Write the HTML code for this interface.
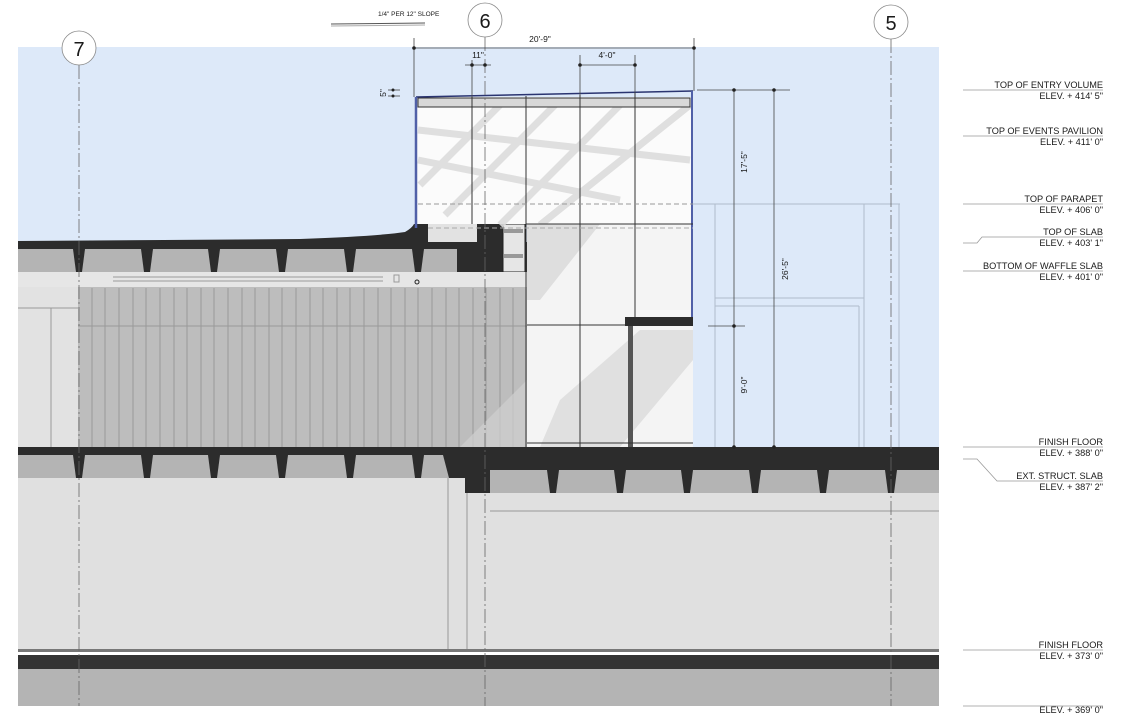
<!DOCTYPE html>
<html><head><meta charset="utf-8"><style>
html,body{margin:0;padding:0;background:#fff;}
svg{display:block;}
text{font-family:"Liberation Sans",sans-serif;fill:#1a1a1a;}
</style></head><body>
<svg width="1125" height="727" viewBox="0 0 1125 727" xmlns="http://www.w3.org/2000/svg">
<rect x="18" y="47" width="921" height="400" fill="#dde9f9"/>
<path d="M18 241 L300 239 Q380 236 405 232 Q412 228 414 224 L420 224 L420 249 L18 249 Z" fill="#2c2c2c"/>
<rect x="18" y="249" width="440" height="23" fill="#b4b4b4"/>
<g fill="#2c2c2c">
<path d="M73 249h12l-3 23h-6z"/><path d="M141 249h12l-3 23h-6z"/><path d="M208 249h12l-3 23h-6z"/><path d="M276 249h12l-3 23h-6z"/><path d="M344 249h12l-3 23h-6z"/><path d="M412 249h12l-3 23h-6z"/>
</g>
<rect x="418" y="224" width="10" height="25" fill="#2c2c2c"/>
<rect x="428" y="224" width="50" height="18" fill="#e2e2e2"/>
<rect x="428" y="242" width="50" height="7" fill="#2c2c2c"/>
<rect x="457" y="242" width="70" height="30" fill="#2c2c2c"/>
<rect x="477" y="224" width="26" height="20" fill="#2c2c2c"/>
<rect x="503" y="224" width="22" height="48" fill="#e6e6e6" stroke="#222" stroke-width="1"/>
<rect x="504" y="229" width="19" height="4" fill="#999"/><rect x="504" y="254" width="19" height="4" fill="#999"/>
<rect x="18" y="272" width="509" height="15" fill="#e6e6e6"/>
<line x1="113" y1="277" x2="383" y2="277" stroke="#999" stroke-width="1"/>
<line x1="113" y1="281" x2="383" y2="281" stroke="#999" stroke-width="1"/>
<rect x="394" y="275" width="5" height="7" fill="none" stroke="#999"/>
<circle cx="417" cy="282" r="2" fill="none" stroke="#222"/>
<rect x="18" y="287" width="60" height="160" fill="#e2e2e2"/>
<line x1="18" y1="308" x2="78" y2="308" stroke="#999"/>
<line x1="51" y1="308" x2="51" y2="447" stroke="#999"/>
<rect x="78" y="287" width="449" height="160" fill="#bdbdbd"/>
<g stroke="#999" stroke-width="1">
<line x1="92" y1="288" x2="92" y2="447"/><line x1="105" y1="288" x2="105" y2="447"/><line x1="119" y1="288" x2="119" y2="447"/><line x1="133" y1="288" x2="133" y2="447"/><line x1="146" y1="288" x2="146" y2="447"/><line x1="160" y1="288" x2="160" y2="447"/><line x1="174" y1="288" x2="174" y2="447"/><line x1="187" y1="288" x2="187" y2="447"/><line x1="201" y1="288" x2="201" y2="447"/><line x1="214" y1="288" x2="214" y2="447"/><line x1="228" y1="288" x2="228" y2="447"/><line x1="242" y1="288" x2="242" y2="447"/><line x1="255" y1="288" x2="255" y2="447"/><line x1="269" y1="288" x2="269" y2="447"/><line x1="282" y1="288" x2="282" y2="447"/><line x1="296" y1="288" x2="296" y2="447"/><line x1="310" y1="288" x2="310" y2="447"/><line x1="323" y1="288" x2="323" y2="447"/><line x1="337" y1="288" x2="337" y2="447"/><line x1="350" y1="288" x2="350" y2="447"/><line x1="364" y1="288" x2="364" y2="447"/><line x1="378" y1="288" x2="378" y2="447"/><line x1="391" y1="288" x2="391" y2="447"/><line x1="405" y1="288" x2="405" y2="447"/><line x1="418" y1="288" x2="418" y2="447"/><line x1="432" y1="288" x2="432" y2="447"/><line x1="446" y1="288" x2="446" y2="447"/><line x1="459" y1="288" x2="459" y2="447"/><line x1="473" y1="288" x2="473" y2="447"/><line x1="486" y1="288" x2="486" y2="447"/><line x1="500" y1="288" x2="500" y2="447"/><line x1="513" y1="288" x2="513" y2="447"/>
<line x1="78" y1="326" x2="527" y2="326"/>
</g>
<path d="M460 447 L527 380 L527 447 Z" fill="#d0d0d0" opacity="0.7"/>
<rect x="415" y="97" width="278" height="127" fill="#fbfbfb"/>
<g stroke="#dcdcdc" stroke-width="7" opacity="0.9">
<line x1="420" y1="185" x2="505" y2="100"/><line x1="445" y1="215" x2="560" y2="100"/><line x1="500" y1="225" x2="625" y2="100"/><line x1="540" y1="225" x2="690" y2="105"/>
<line x1="418" y1="130" x2="690" y2="160"/><line x1="418" y1="160" x2="620" y2="200"/>
</g>
<rect x="527" y="224" width="166" height="223" fill="#f4f4f4"/>
<path d="M527 224 L600 224 L540 300 L527 300 Z" fill="#dedede"/>
<path d="M560 400 L640 330 L693 330 L693 360 L620 447 L540 447 Z" fill="#e0e0e0"/>
<rect x="418" y="98" width="272" height="9" fill="#d8d8d8" stroke="#333" stroke-width="1"/>
<path d="M416 97 L693 91" stroke="#2a3470" stroke-width="1.5" fill="none"/>
<line x1="416" y1="97" x2="416" y2="228" stroke="#5060a8" stroke-width="2.5"/>
<line x1="692" y1="91" x2="692" y2="320" stroke="#5060a8" stroke-width="2"/>
<g stroke="#333" stroke-width="1">
<line x1="472" y1="97" x2="472" y2="224"/><line x1="526" y1="96" x2="526" y2="447"/><line x1="580" y1="95" x2="580" y2="447"/><line x1="635" y1="93" x2="635" y2="320"/>
<line x1="526" y1="224" x2="693" y2="224"/><line x1="527" y1="325" x2="627" y2="325"/>
</g>
<line x1="418" y1="204" x2="693" y2="204" stroke="#999" stroke-dasharray="5,3"/>
<line x1="428" y1="228" x2="693" y2="228" stroke="#aaa" stroke-dasharray="5,3"/>
<rect x="625" y="317" width="68" height="9" fill="#2c2c2c"/>
<rect x="628" y="326" width="5" height="121" fill="#555"/>
<line x1="527" y1="443" x2="693" y2="443" stroke="#333"/>
<g stroke="#b0bccc" stroke-width="1" fill="none">
<line x1="693" y1="204" x2="900" y2="204"/><line x1="715" y1="204" x2="715" y2="447"/><line x1="864" y1="204" x2="864" y2="447"/><line x1="899" y1="204" x2="899" y2="447"/><line x1="715" y1="298" x2="864" y2="298"/><line x1="715" y1="306" x2="859" y2="306"/><line x1="859" y1="306" x2="859" y2="447"/>
</g>
<rect x="18" y="447" width="921" height="8" fill="#2c2c2c"/>
<rect x="18" y="455" width="447" height="23" fill="#b4b4b4"/>
<g fill="#2c2c2c">
<path d="M73 455h12l-3 23h-6z"/><path d="M141 455h12l-3 23h-6z"/><path d="M208 455h12l-3 23h-6z"/><path d="M276 455h12l-3 23h-6z"/><path d="M344 455h12l-3 23h-6z"/><path d="M412 455h12l-3 23h-6z"/><path d="M443 455h22v23h-16z"/>
</g>
<rect x="465" y="455" width="474" height="15" fill="#2c2c2c"/>
<rect x="465" y="470" width="25" height="23" fill="#2c2c2c"/>
<rect x="490" y="470" width="449" height="23" fill="#b4b4b4"/>
<g fill="#2c2c2c">
<path d="M547 470h12l-3 23h-6z"/><path d="M614 470h12l-3 23h-6z"/><path d="M681 470h12l-3 23h-6z"/><path d="M749 470h12l-3 23h-6z"/><path d="M817 470h12l-3 23h-6z"/><path d="M885 470h12l-3 23h-6z"/>
</g>
<rect x="18" y="478" width="447" height="172" fill="#e0e0e0"/>
<rect x="465" y="493" width="474" height="157" fill="#e0e0e0"/>
<g stroke="#999" stroke-width="1">
<line x1="448" y1="478" x2="448" y2="650"/><line x1="467" y1="493" x2="467" y2="650"/><line x1="490" y1="511" x2="939" y2="511"/>
</g>
<rect x="18" y="649" width="921" height="3" fill="#777"/>
<rect x="18" y="655" width="921" height="14" fill="#333"/>
<rect x="18" y="669" width="921" height="37" fill="#b4b4b4"/>
<g stroke="#666" stroke-width="0.8" stroke-dasharray="14,3,2,3" fill="none">
<line x1="79" y1="65" x2="79" y2="706"/><line x1="485" y1="37" x2="485" y2="706"/><line x1="891" y1="39" x2="891" y2="706"/>
</g>
<g fill="#fff" stroke="#888" stroke-width="0.8">
<circle cx="79" cy="48" r="17"/><circle cx="485" cy="20" r="17"/><circle cx="891" cy="22" r="17"/>
</g>
<text x="79" y="56" font-size="20" text-anchor="middle">7</text>
<text x="485" y="28" font-size="20" text-anchor="middle">6</text>
<text x="891" y="30" font-size="20" text-anchor="middle">5</text>
<text x="378" y="16" font-size="6.5">1/4" PER 12" SLOPE</text>
<line x1="331" y1="24" x2="425" y2="23" stroke="#555"/>
<line x1="331" y1="26" x2="425" y2="25" stroke="#aaa"/>
<g stroke="#444" stroke-width="0.8" fill="none">
<line x1="413" y1="48" x2="695" y2="48"/><line x1="414" y1="38" x2="414" y2="97"/><line x1="694" y1="38" x2="694" y2="91"/>
<line x1="465" y1="65" x2="491" y2="65"/><line x1="472" y1="60" x2="472" y2="97"/>
<line x1="580" y1="65" x2="635" y2="65"/><line x1="580" y1="55" x2="580" y2="95"/><line x1="635" y1="55" x2="635" y2="93"/>
<line x1="697" y1="90" x2="790" y2="90"/><line x1="734" y1="90" x2="734" y2="447"/><line x1="774" y1="90" x2="774" y2="447"/>
<line x1="708" y1="326" x2="745" y2="326"/>
<line x1="388" y1="90" x2="400" y2="90"/><line x1="388" y1="96" x2="400" y2="96"/>
</g>
<g fill="#222">
<circle cx="414" cy="48" r="1.8"/><circle cx="694" cy="48" r="1.8"/><circle cx="472" cy="65" r="1.8"/><circle cx="485" cy="65" r="1.8"/><circle cx="580" cy="65" r="1.8"/><circle cx="635" cy="65" r="1.8"/><circle cx="734" cy="90" r="1.8"/><circle cx="774" cy="90" r="1.8"/><circle cx="734" cy="326" r="1.8"/><circle cx="734" cy="447" r="1.8"/><circle cx="774" cy="447" r="1.8"/><circle cx="393" cy="90" r="1.5"/><circle cx="393" cy="96" r="1.5"/>
</g>
<text x="540" y="42" font-size="8.5" text-anchor="middle">20'-9"</text>
<text x="478" y="58" font-size="8.5" text-anchor="middle">11"</text>
<text x="607" y="58" font-size="8.5" text-anchor="middle">4'-0"</text>
<text transform="translate(386,93) rotate(-90)" font-size="8.5" text-anchor="middle">5"</text>
<text transform="translate(747,162) rotate(-90)" font-size="8.5" text-anchor="middle">17'-5"</text>
<text transform="translate(788,269) rotate(-90)" font-size="8.5" text-anchor="middle">26'-5"</text>
<text transform="translate(747,385) rotate(-90)" font-size="8.5" text-anchor="middle">9'-0"</text>
<g stroke="#999" stroke-width="0.8" fill="none">
<line x1="963" y1="90" x2="1103" y2="90"/>
<line x1="963" y1="136" x2="1103" y2="136"/>
<line x1="963" y1="204" x2="1103" y2="204"/>
<path d="M963 243 L977 243 L982 237 L1103 237"/>
<line x1="963" y1="271" x2="1103" y2="271"/>
<line x1="963" y1="447" x2="1103" y2="447"/>
<path d="M963 459 L977 459 L997 481 L1103 481"/>
<line x1="963" y1="650" x2="1103" y2="650"/>
<line x1="963" y1="706" x2="1103" y2="706"/>
</g>
<g font-size="9.2" text-anchor="end">
<text x="1103" y="88">TOP OF ENTRY VOLUME</text><text x="1103" y="99">ELEV. + 414' 5"</text>
<text x="1103" y="134">TOP OF EVENTS PAVILION</text><text x="1103" y="145">ELEV. + 411' 0"</text>
<text x="1103" y="202">TOP OF PARAPET</text><text x="1103" y="213">ELEV. + 406' 0"</text>
<text x="1103" y="235">TOP OF SLAB</text><text x="1103" y="246">ELEV. + 403' 1"</text>
<text x="1103" y="269">BOTTOM OF WAFFLE SLAB</text><text x="1103" y="280">ELEV. + 401' 0"</text>
<text x="1103" y="445">FINISH FLOOR</text><text x="1103" y="456">ELEV. + 388' 0"</text>
<text x="1103" y="479">EXT. STRUCT. SLAB</text><text x="1103" y="490">ELEV. + 387' 2"</text>
<text x="1103" y="648">FINISH FLOOR</text><text x="1103" y="659">ELEV. + 373' 0"</text>
<text x="1103" y="713">ELEV. + 369' 0"</text>
</g>
</svg>
</body></html>
